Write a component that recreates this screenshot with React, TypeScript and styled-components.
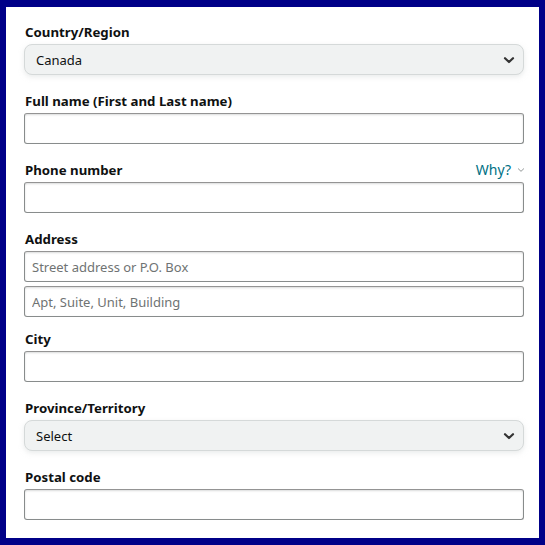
import React from 'react';
import styled, { createGlobalStyle } from 'styled-components';

const GlobalStyle = createGlobalStyle`
  html, body {
    margin: 0;
    padding: 0;
    background: #000088;
  }
  body {
    font-family: "Noto Sans", "Liberation Sans", Arial, sans-serif;
    color: #0f1111;
  }
`;

const Frame = styled.div`
  box-sizing: border-box;
  width: 545px;
  height: 545px;
  border-style: solid;
  border-color: #000088;
  border-width: 7px 6px 7px 6px;
  background: #ffffff;
  padding: 15px 15px 0 18px;
`;

const Form = styled.form`
  display: flex;
  flex-direction: column;
  width: 500px;
`;

const Group = styled.div<{ tight?: boolean }>`
  display: flex;
  flex-direction: column;
  margin-bottom: ${(p) => (p.tight ? '12px' : '16px')};
`;

const LabelRow = styled.div`
  display: flex;
  align-items: center;
  justify-content: space-between;
  height: 20px;
  margin-bottom: 2px;
  padding-left: 1px;
`;

const Label = styled.label`
  font-size: 13.25px;
  font-weight: 700;
  line-height: 20px;
  color: #0f1111;
`;

const WhyLink = styled.a`
  display: flex;
  align-items: center;
  gap: 6px;
  font-size: 14px;
  line-height: 20px;
  color: #007185;
  text-decoration: none;
  margin-right: -1px;
`;

const Input = styled.input<{ stacked?: boolean }>`
  box-sizing: border-box;
  width: 100%;
  height: 31px;
  margin: 0;
  margin-top: ${(p) => (p.stacked ? '4px' : '0')};
  padding: 3px 7px;
  border: 1px solid #888c8c;
  border-top-color: #949494;
  border-radius: 3px;
  box-shadow: 0 1px 2px rgba(15, 17, 17, 0.15) inset;
  font-family: "Noto Sans", "Liberation Sans", Arial, sans-serif;
  font-size: 13px;
  color: #0f1111;
  background: #fff;
  outline: none;
  &::placeholder {
    color: #6f7373;
  }
`;

const SelectBox = styled.div`
  box-sizing: border-box;
  display: flex;
  align-items: center;
  justify-content: space-between;
  width: 100%;
  height: 31px;
  padding: 0 8px 0 11px;
  background: #f0f2f2;
  border: 1px solid #d5d9d9;
  border-radius: 8px;
  box-shadow: 0 2px 5px rgba(213, 217, 217, 0.5);
  font-size: 13px;
  color: #0f1111;
`;

const Chevron = ({ size, color, weight }: { size: number; color: string; weight: number }) => (
  <svg width={size} height={size} viewBox="0 0 12 12" fill="none">
    <path d="M2 4.2 L6 8 L10 4.2" stroke={color} strokeWidth={weight} strokeLinecap="round" strokeLinejoin="round" />
  </svg>
);

const Select = ({ value }: { value: string }) => (
  <SelectBox>
    <span>{value}</span>
    <Chevron size={12} color="#333" weight={2.2} />
  </SelectBox>
);

export default function App() {
  return (
    <>
      <GlobalStyle />
      <Frame>
        <Form onSubmit={(e) => e.preventDefault()}>
          <Group>
            <LabelRow><Label>Country/Region</Label></LabelRow>
            <Select value="Canada" />
          </Group>
          <Group>
            <LabelRow><Label>Full name (First and Last name)</Label></LabelRow>
            <Input type="text" />
          </Group>
          <Group>
            <LabelRow>
              <Label>Phone number</Label>
              <WhyLink href="#">
                Why?
                <Chevron size={8} color="#8a8f8f" weight={1.4} />
              </WhyLink>
            </LabelRow>
            <Input type="tel" />
          </Group>
          <Group tight>
            <LabelRow><Label>Address</Label></LabelRow>
            <Input type="text" placeholder="Street address or P.O. Box" />
            <Input type="text" stacked placeholder="Apt, Suite, Unit, Building" />
          </Group>
          <Group>
            <LabelRow><Label>City</Label></LabelRow>
            <Input type="text" />
          </Group>
          <Group>
            <LabelRow><Label>Province/Territory</Label></LabelRow>
            <Select value="Select" />
          </Group>
          <Group>
            <LabelRow><Label>Postal code</Label></LabelRow>
            <Input type="text" />
          </Group>
        </Form>
      </Frame>
    </>
  );
}
